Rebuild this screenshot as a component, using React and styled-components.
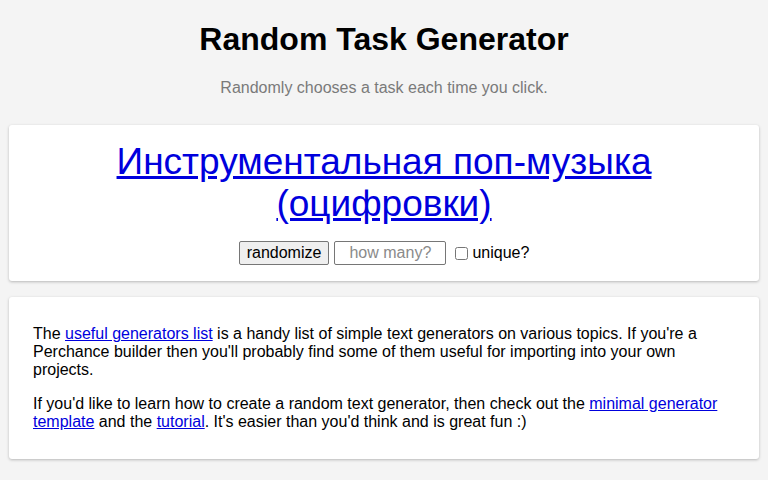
import { createGlobalStyle } from 'styled-components';
import styled from 'styled-components';

const GlobalStyle = createGlobalStyle`
  html, body {
    margin: 0;
    padding: 0;
    background: #f4f4f4;
    font-family: 'Liberation Sans', Arial, sans-serif;
    color: #000;
  }
  a {
    color: #0000dd;
  }
`;

export default function App() {
  return (
    <>
      <GlobalStyle />
      <Page>
        <Title>Random Task Generator</Title>
        <Subtitle>Randomly chooses a task each time you click.</Subtitle>
        <Card>
          <Result>
            <a href="#">Инструментальная поп-музыка (оцифровки)</a>
          </Result>
          <Controls>
            <RandomButton>randomize</RandomButton>
            <CountInput placeholder="how many?" />
            <UniqueLabel>
              <Check type="checkbox" />
              unique?
            </UniqueLabel>
          </Controls>
        </Card>
        <InfoCard>
          <Para>
            The <a href="#">useful generators list</a> is a handy list of simple
            text generators on various topics. If you're a Perchance builder
            then you'll probably find some of them useful for importing into
            your own projects.
          </Para>
          <Para>
            If you'd like to learn how to create a random text generator, then
            check out the <a href="#">minimal generator template</a> and the{' '}
            <a href="#">tutorial</a>. It's easier than you'd think and is great
            fun :)
          </Para>
        </InfoCard>
      </Page>
    </>
  );
}

const Page = styled.div`
  padding: 20px 9px 20px;
  display: flex;
  flex-direction: column;
`;

const Title = styled.h1`
  margin: 0;
  text-align: center;
  font-size: 32px;
  line-height: 38px;
  font-weight: 700;
`;

const Subtitle = styled.p`
  margin: 21px 0 28px;
  text-align: center;
  font-size: 16px;
  line-height: 18px;
  color: #7a7a7a;
`;

const Card = styled.div`
  background: #fff;
  border-radius: 3px;
  box-shadow: 0 1px 3px rgba(0, 0, 0, 0.25);
  padding: 16px 24px;
  display: flex;
  flex-direction: column;
  align-items: center;
  gap: 16px;
  margin-bottom: 16px;
`;

const Result = styled.div`
  text-align: center;
  font-size: 37px;
  line-height: 42px;
`;

const Controls = styled.div`
  display: flex;
  align-items: center;
  gap: 5px;
  height: 24px;
`;

const RandomButton = styled.button`
  font-family: 'Liberation Sans', Arial, sans-serif;
  font-size: 16px;
  height: 24px;
  padding: 0 7px;
  background: #efefef;
  border: 1px solid #767676;
  border-radius: 2px;
  color: #000;
`;

const CountInput = styled.input`
  font-family: 'Liberation Sans', Arial, sans-serif;
  font-size: 16px;
  width: 112px;
  height: 24px;
  box-sizing: border-box;
  border: 1px solid #767676;
  border-radius: 2px;
  text-align: center;
  padding: 0 4px;
  &::placeholder {
    color: #8a8a8a;
  }
`;

const UniqueLabel = styled.label`
  display: flex;
  align-items: center;
  font-size: 16px;
  margin-left: 4px;
`;

const Check = styled.input`
  width: 13px;
  height: 13px;
  margin: 0 4px 0 0;
`;

const InfoCard = styled.div`
  background: #fff;
  border-radius: 3px;
  box-shadow: 0 1px 3px rgba(0, 0, 0, 0.25);
  padding: 12px 24px;
`;

const Para = styled.p`
  margin: 16px 0;
  font-size: 16px;
  line-height: 18px;
`;
